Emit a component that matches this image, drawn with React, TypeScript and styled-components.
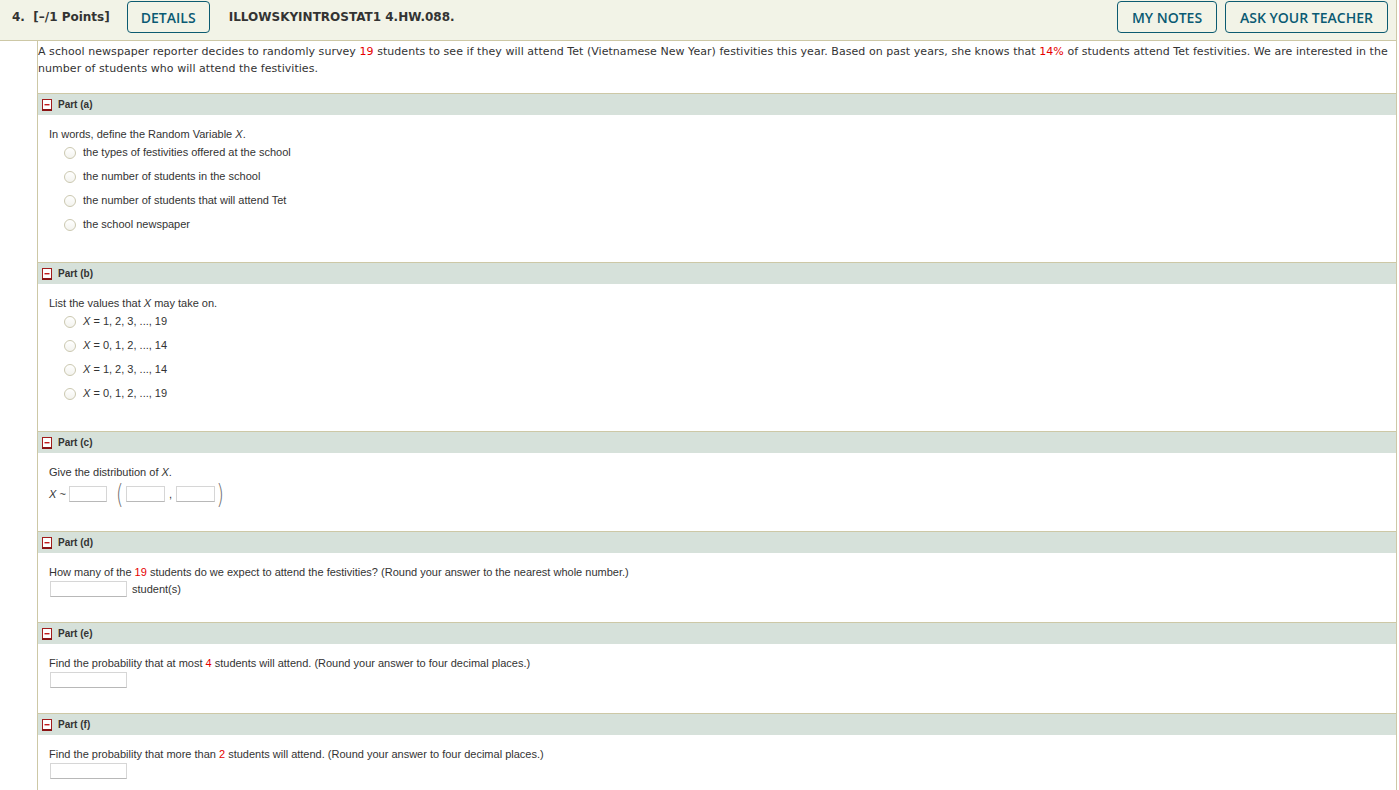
import styled, { createGlobalStyle } from 'styled-components';

const GlobalStyle = createGlobalStyle`
  body {
    margin: 0;
    background: #ffffff;
  }
`;

const Page = styled.div`
  width: 1396px;
  min-height: 790px;
  border-right: 1px solid #cdc8a6;
`;

const Header = styled.div`
  display: flex;
  align-items: center;
  height: 41px;
  box-sizing: border-box;
  padding: 1px 8px 7px 12px;
  background: #f2f3e7;
  border-bottom: 1px solid #cdc8a6;
  font-family: "DejaVu Sans", Verdana, sans-serif;
  font-weight: bold;
  font-size: 12px;
  color: #333333;
`;

const Points = styled.span`
  margin-right: 17px;
`;

const Title = styled.span`
  margin-left: 19px;
  flex: 1;
`;

const Button = styled.button<{ $w: number }>`
  width: ${(p) => p.$w}px;
  height: 32px;
  padding: 0;
  border: 1px solid #0c5b71;
  border-radius: 4px;
  background: transparent;
  color: #0a5a73;
  font-family: "Open Sans", sans-serif;
  font-weight: 600;
  font-size: 14px;
  & + & {
    margin-left: 8px;
  }
`;

const Content = styled.div`
  margin-left: 37px;
  border-left: 1px solid #cdc8a6;
`;

const Problem = styled.div`
  padding: 2px 8px 16px 0;
  font-family: "DejaVu Sans", Verdana, sans-serif;
  font-size: 11px;
  line-height: 17px;
  letter-spacing: 0.05px;
  color: #333333;
`;

const Red = styled.span`
  color: #e60000;
`;

const PartHead = styled.div`
  display: flex;
  align-items: center;
  gap: 6px;
  height: 22px;
  box-sizing: border-box;
  padding-left: 4px;
  border-top: 1px solid #cdc8a6;
  background: #d6e1da;
  font-family: "Liberation Sans", Arial, sans-serif;
  font-weight: bold;
  font-size: 10px;
  color: #333333;
`;

const PartBody = styled.div`
  padding: 13px 11px 22px;
  font-family: "Liberation Sans", Arial, sans-serif;
  font-size: 11px;
  color: #333333;
`;

const Question = styled.div`
  line-height: 12px;
`;

const Options = styled.div`
  margin-bottom: 4px;
`;

const Option = styled.label`
  display: flex;
  align-items: center;
  height: 24px;
  padding-left: 15px;
`;

const Radio = styled.span`
  width: 10px;
  height: 10px;
  border-radius: 50%;
  border: 1px solid #cbc8b0;
  background: linear-gradient(#ffffff, #f3f3ee);
  margin-right: 7px;
  margin-top: 2px;
`;

const AnswerRow = styled.div<{ $h: number }>`
  display: flex;
  align-items: center;
  height: ${(p) => p.$h}px;
`;

const Box = styled.span<{ $w: number }>`
  display: inline-block;
  width: ${(p) => p.$w}px;
  height: 16px;
  box-sizing: border-box;
  border: 1px solid #d6d6d6;
  border-bottom-color: #b8b8b8;
  background: #ffffff;
`;

const Paren = styled.span`
  font-family: "DejaVu Sans", sans-serif;
  font-weight: 200;
  font-size: 27px;
  line-height: 30px;
  color: #6e6e6e;
  transform: scaleX(0.7);
`;

const Sep = styled.span`
  margin: 0 4px;
`;

const Unit = styled.span`
  margin-left: 5px;
`;

const Collapse = () => (
  <svg width="10" height="12" viewBox="0 0 10 12">
    <rect x="0.5" y="0.5" width="9" height="10" fill="#ffffff" stroke="#a11c1c" />
    <rect x="0" y="10" width="10" height="2" fill="#8a1414" />
    <rect x="2.5" y="5" width="5" height="1.4" fill="#c01a1a" />
  </svg>
);

type PartProps = { label: string; children: React.ReactNode };

const Part = ({ label, children }: PartProps) => (
  <>
    <PartHead>
      <Collapse />
      Part ({label})
    </PartHead>
    <PartBody>{children}</PartBody>
  </>
);

const Xv = styled.i``;

const partA = [
  'the types of festivities offered at the school',
  'the number of students in the school',
  'the number of students that will attend Tet',
  'the school newspaper',
];

const partB = ['1, 2, 3, ..., 19', '0, 1, 2, ..., 14', '1, 2, 3, ..., 14', '0, 1, 2, ..., 19'];

export default function App() {
  return (
    <Page>
      <GlobalStyle />
      <Header>
        <Points>4.&nbsp; [–/1 Points]</Points>
        <Button $w={83}>DETAILS</Button>
        <Title>ILLOWSKYINTROSTAT1 4.HW.088.</Title>
        <Button $w={100}>MY NOTES</Button>
        <Button $w={163}>ASK YOUR TEACHER</Button>
      </Header>
      <Content>
        <Problem>
          A school newspaper reporter decides to randomly survey <Red>19</Red> students to see if they will
          attend Tet (Vietnamese New Year) festivities this year. Based on past years, she knows that{' '}
          <Red>14%</Red> of students attend Tet festivities. We are interested in the number of students who
          will attend the festivities.
        </Problem>

        <Part label="a">
          <Question>
            In words, define the Random Variable <Xv>X</Xv>.
          </Question>
          <Options>
            {partA.map((o) => (
              <Option key={o}>
                <Radio />
                {o}
              </Option>
            ))}
          </Options>
        </Part>

        <Part label="b">
          <Question>
            List the values that <Xv>X</Xv> may take on.
          </Question>
          <Options>
            {partB.map((o) => (
              <Option key={o}>
                <Radio />
                <Xv>X</Xv>&nbsp;= {o}
              </Option>
            ))}
          </Options>
        </Part>

        <Part label="c">
          <Question>
            Give the distribution of <Xv>X</Xv>.
          </Question>
          <AnswerRow $h={31}>
            <Xv>X</Xv>&nbsp;~&nbsp;
            <Box $w={38} />
            <Paren>&nbsp;(</Paren>
            <Box $w={39} />
            <Sep>,</Sep>
            <Box $w={39} />
            <Paren>)</Paren>
          </AnswerRow>
        </Part>

        <Part label="d">
          <Question>
            How many of the <Red>19</Red> students do we expect to attend the festivities? (Round your answer to
            the nearest whole number.)
          </Question>
          <AnswerRow $h={22}>
            <Box $w={77} style={{ marginLeft: 1 }} />
            <Unit>student(s)</Unit>
          </AnswerRow>
        </Part>

        <Part label="e">
          <Question>
            Find the probability that at most <Red>4</Red> students will attend. (Round your answer to four decimal
            places.)
          </Question>
          <AnswerRow $h={22}>
            <Box $w={77} style={{ marginLeft: 1 }} />
          </AnswerRow>
        </Part>

        <Part label="f">
          <Question>
            Find the probability that more than <Red>2</Red> students will attend. (Round your answer to four
            decimal places.)
          </Question>
          <AnswerRow $h={22}>
            <Box $w={77} style={{ marginLeft: 1 }} />
          </AnswerRow>
        </Part>
      </Content>
    </Page>
  );
}
